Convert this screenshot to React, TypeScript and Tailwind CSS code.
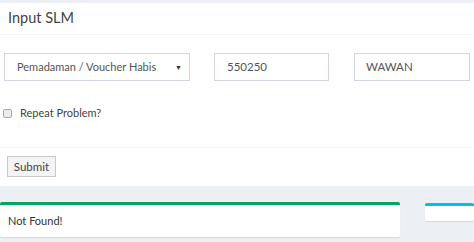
import React from "react";

export default function App() {
  return (
    <div
      className="w-[474px] h-[242px] overflow-hidden bg-[#ecf0f5] pt-[3px]"
      style={{ fontFamily: "Lato, 'Open Sans', sans-serif" }}
    >
      <div className="bg-white">
        <div className="h-[32px] border-b border-[#f4f4f4] flex items-center pl-[8px]">
          <span className="text-[14.5px] text-[#444] leading-none">Input SLM</span>
        </div>
        <div className="h-[112px] pt-[18px] px-[4px]">
          <div className="flex items-center">
            <div className="w-[186px] h-[28px] border border-[#d2d6de] flex items-center pl-[12px] pr-[7px] justify-between">
              <span className="text-[11px] text-[#555]">Pemadaman / Voucher Habis</span>
              <span className="text-[7px] text-[#333]">▼</span>
            </div>
            <div className="ml-[24px] w-[115px] h-[28px] border border-[#d2d6de] flex items-center pl-[12px]">
              <span className="text-[11.5px] text-[#555]">550250</span>
            </div>
            <div className="ml-[25px] w-[116px] h-[28px] border border-[#d2d6de] flex items-center pl-[11px]">
              <span className="text-[11.5px] text-[#555]">WAWAN</span>
            </div>
          </div>
          <div className="flex items-center mt-[24px]">
            <div className="w-[9px] h-[9px] border border-[#a9a9a9] rounded-[2px] bg-[#ececec] -ml-[1px]" />
            <span className="ml-[8px] text-[11px] text-[#444]">Repeat Problem?</span>
          </div>
        </div>
        <div className="h-[39px] border-t border-[#f4f4f4] pt-[8px] pl-[7px]">
          <div className="w-[49px] h-[21px] bg-[#f4f4f4] border border-[#c8c8c8] flex items-center justify-center text-[11.5px] text-[#444]">
            Submit
          </div>
        </div>
      </div>
      <div className="mt-[16px] flex items-start">
        <div className="w-[400px] h-[35px] bg-white border-t-[3px] border-[#00a65a] rounded-[2px] flex items-center pl-[8px] shadow-[0_1px_1px_rgba(0,0,0,0.1)]">
          <span className="text-[11px] text-[#333]">Not Found!</span>
        </div>
        <div className="ml-[25px] flex-1 h-[18px] mt-[1px] bg-white border-t-[3px] border-[#00c0ef] rounded-[2px] shadow-[0_1px_1px_rgba(0,0,0,0.1)]" />
      </div>
    </div>
  );
}
